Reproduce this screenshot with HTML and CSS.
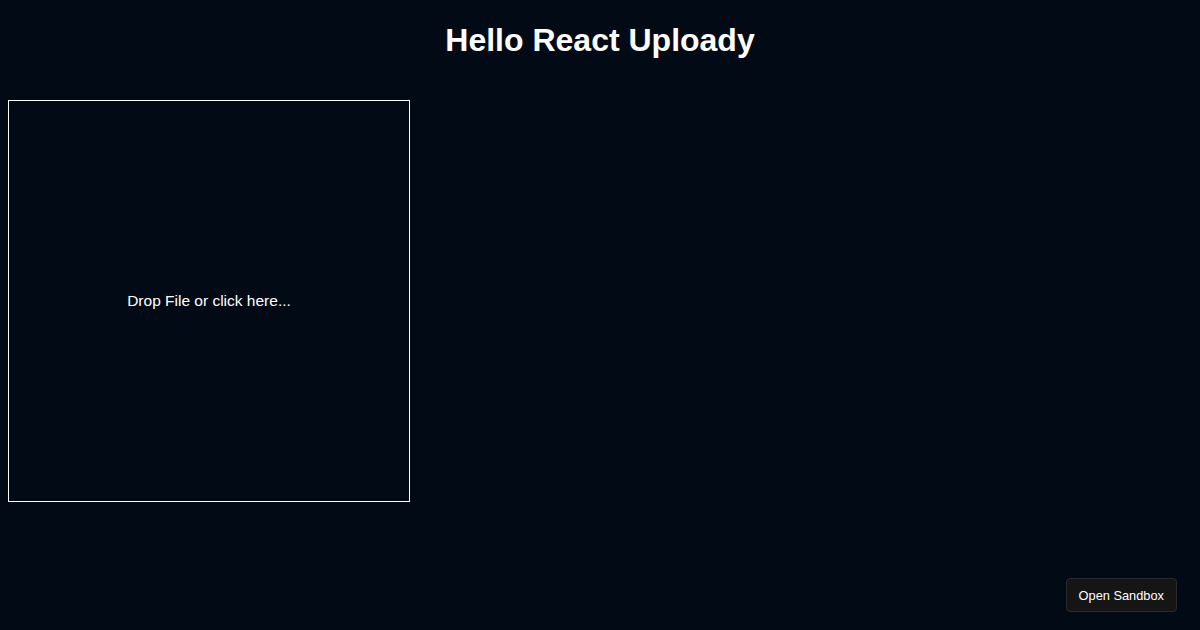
FILE: index.html
```html
<!DOCTYPE html>
<html>
<head>
<meta charset="utf-8">
<link rel="stylesheet" href="styles.css">
</head>
<body>
<div class="app">
  <h1 class="title">Hello React Uploady</h1>
  <div class="drop-zone">Drop File or click here...</div>
</div>
<button class="sandbox-btn">Open Sandbox</button>
</body>
</html>
```

FILE: styles.css
```css
html, body {
  height: 100%;
}
body {
  margin: 0;
  padding: 8px;
  box-sizing: border-box;
  background: #020a16;
  color: #fff;
  font-family: "Liberation Sans", Arial, sans-serif;
}
.title {
  margin: 14px 0 0;
  text-align: center;
  font-size: 32px;
  font-weight: bold;
  line-height: 37px;
}
.drop-zone {
  margin-top: 41px;
  width: 400px;
  height: 400px;
  border: 1px solid #fff;
  display: flex;
  align-items: center;
  justify-content: center;
  font-size: 15.5px;
}
.sandbox-btn {
  position: fixed;
  right: 23px;
  bottom: 18px;
  height: 34px;
  padding: 0 12px;
  background: #151515;
  color: #fff;
  border: 1px solid #2a2a2a;
  border-radius: 4px;
  font-family: "Liberation Sans", Arial, sans-serif;
  font-size: 12.8px;
}
```
